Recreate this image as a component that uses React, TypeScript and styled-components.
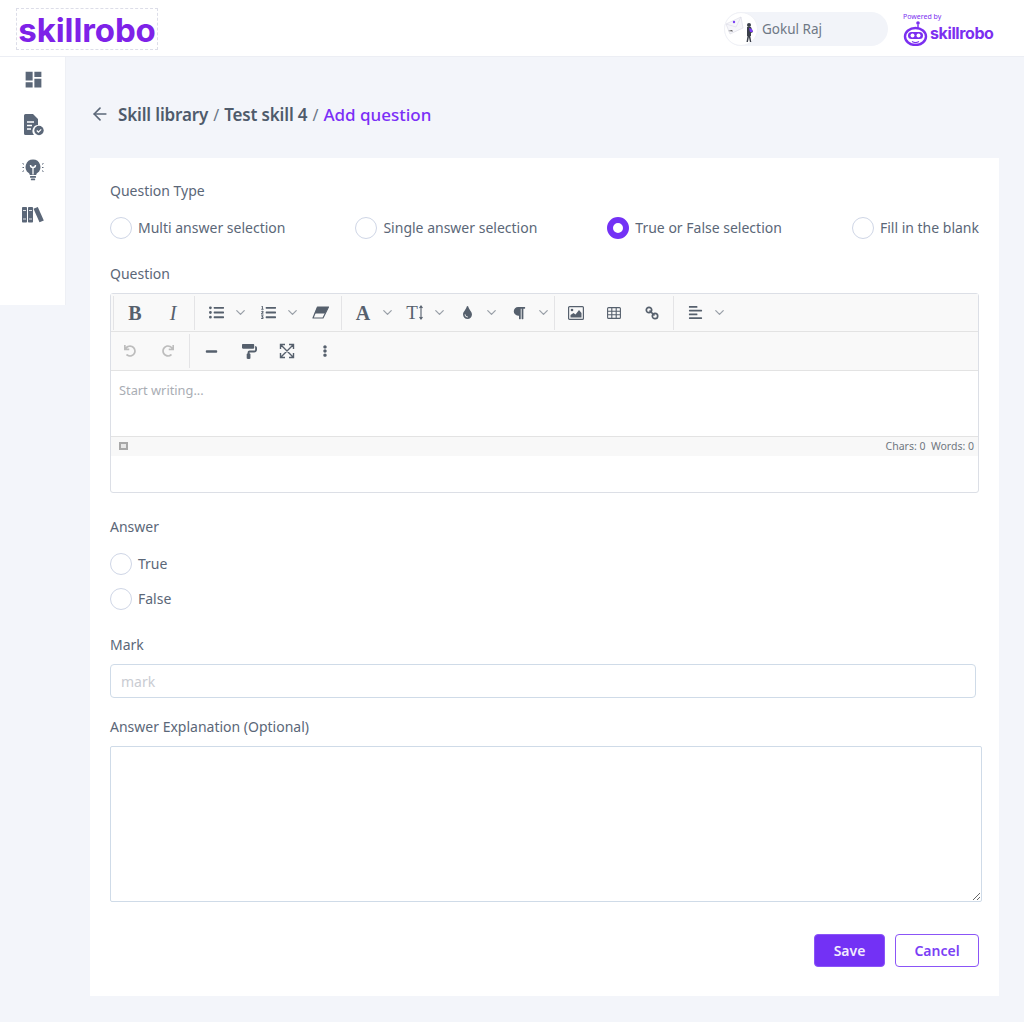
import styled, { createGlobalStyle } from "styled-components";
import { ArrowLeft, ChevronDown } from "lucide-react";
import { MdDashboard } from "react-icons/md";
import {
  FaEllipsisV,
  FaListOl,
  FaListUl,
  FaMinus,
  FaPaintRoller,
  FaParagraph,
  FaRedo,
  FaAlignLeft,
  FaTint,
  FaUndo,
} from "react-icons/fa";
import type { ReactNode } from "react";

const GlobalStyle = createGlobalStyle`
    html, body {
        margin: 0;
        padding: 0;
        background: #f3f5fa;
    }
    * {
        box-sizing: border-box;
    }
    body {
        font-family: "Noto Sans", "Open Sans", sans-serif;
        color: #5b6778;
    }
`;

const Page = styled.div`
    width: 1024px;
    min-height: 1022px;
    display: flex;
    flex-direction: column;
`;

const Header = styled.header`
    height: 57px;
    background: #fff;
    border-bottom: 1px solid #eceef4;
    display: flex;
    align-items: center;
    padding: 1px 30px 0 16px;
`;

const LogoBox = styled.div`
    width: 142px;
    height: 42px;
    border: 1px dashed #dcdde8;
    padding-top: 2px;
    display: flex;
    align-items: center;
    justify-content: center;
    font-family: "Inter", sans-serif;
    font-size: 33px;
    font-weight: 700;
    letter-spacing: -0.1px;
    color: #7e22e8;
`;

const UserPill = styled.div`
    margin-left: auto;
    width: 164px;
    height: 34px;
    border-radius: 17px;
    background: #f2f4f9;
    display: flex;
    align-items: center;
    gap: 4px;
    font-size: 13.5px;
    color: #6f7885;
`;

const Avatar = styled.div`
    width: 34px;
    height: 34px;
    border-radius: 50%;
    background: #fff;
    border: 1px solid #f0f1f6;
    flex: none;
`;

const Powered = styled.div`
    margin-left: 15px;
    width: 91px;
    display: flex;
    flex-direction: column;
    color: #7b2ff0;
`;

const PoweredText = styled.span`
    font-size: 7px;
    line-height: 9px;
`;

const PoweredBrand = styled.div`
    display: flex;
    align-items: center;
    gap: 2px;
    font-family: "Inter", sans-serif;
    font-weight: 700;
    font-size: 16px;
    letter-spacing: -0.4px;
    line-height: 24px;
`;

const Body = styled.div`
    flex: 1;
    display: flex;
    align-items: flex-start;
`;

const Sidebar = styled.aside`
    width: 66px;
    flex: none;
    height: 248px;
    background: #fff;
    border-right: 1px solid #eef0f5;
    display: flex;
    flex-direction: column;
    align-items: center;
    padding-left: 1px;
    color: #5b6778;
`;

const SideItem = styled.div`
    width: 24px;
    height: 45px;
    display: flex;
    align-items: center;
    justify-content: center;
`;

const Main = styled.main`
    flex: 1;
    min-width: 0;
    padding: 43px 25px 26px 24px;
`;

const Crumbs = styled.div`
    height: 28px;
    display: flex;
    align-items: center;
    gap: 8px;
    font-size: 17px;
    margin-bottom: 30px;
    svg {
        color: #5b6778;
    }
`;

const Crumb = styled.span<{ $active?: boolean }>`
    font-weight: ${(p) => (p.$active ? 500 : 600)};
    letter-spacing: ${(p) => (p.$active ? 0 : -0.15)}px;
    color: ${(p) => (p.$active ? "#7b2ff7" : "#4f5b6b")};
`;

const Slash = styled.span`
    color: #6b7685;
    font-size: 16px;
    margin: 0 5px;
`;

const Card = styled.form`
    background: #fff;
    padding: 23px 20px 29px;
    height: 838px;
`;

const Label = styled.div<{ $top?: number; $bottom?: number }>`
    font-size: 14px;
    line-height: 20px;
    color: #5b6778;
    margin-top: ${(p) => p.$top ?? 0}px;
    margin-bottom: ${(p) => p.$bottom ?? 9}px;
`;

const RadioRow = styled.div`
    display: flex;
    justify-content: space-between;
`;

const RadioItem = styled.label<{ $top?: number }>`
    display: flex;
    align-items: center;
    gap: 6px;
    height: 22px;
    font-size: 14px;
    color: #5b6778;
    margin-top: ${(p) => p.$top ?? 0}px;
`;

const RadioMark = styled.span<{ $on?: boolean }>`
    width: 22px;
    height: 22px;
    border-radius: 50%;
    flex: none;
    background: #fff;
    border: ${(p) => (p.$on ? "6px solid #7331f5" : "1px solid #cfd6e6")};
`;

const RadioText = styled.span`
    margin-top: -2px;
`;

const Editor = styled.div`
    height: 200px;
    border: 1px solid #dcdfe6;
    border-radius: 3px;
    background: #fff;
`;

const ToolRow = styled.div<{ $tall?: boolean }>`
    height: ${(p) => (p.$tall ? 39 : 38)}px;
    background: #f9f9f9;
    border-bottom: 1px solid #e3e3e3;
    display: flex;
    align-items: center;
`;

const Sep = styled.span`
    width: 5px;
    height: 34px;
    display: flex;
    justify-content: center;
    &::before {
        content: "";
        width: 1px;
        background: #e4e4e6;
    }
`;

const Tool = styled.span<{ $drop?: boolean; $muted?: boolean }>`
    width: ${(p) => (p.$drop ? 52 : 38)}px;
    height: 34px;
    flex: none;
    display: flex;
    align-items: center;
    color: ${(p) => (p.$muted ? "#bdbdbd" : "#56606d")};
`;

const ToolIcon = styled.span`
    width: 38px;
    flex: none;
    display: flex;
    align-items: center;
    justify-content: center;
`;

const Glyph = styled.span<{ $italic?: boolean; $size?: number; $light?: boolean }>`
    font-family: "Liberation Serif", serif;
    font-size: ${(p) => p.$size ?? 20}px;
    font-weight: ${(p) => (p.$italic || p.$light ? 400 : 700)};
    font-style: ${(p) => (p.$italic ? "italic" : "normal")};
    line-height: 1;
`;

const ToolChevron = styled(ChevronDown)`
    width: 15px;
    height: 15px;
    color: #9aa0a8;
    margin-left: -2px;
`;

const Writing = styled.div`
    height: 65px;
    padding: 9px 8px;
    font-size: 12.8px;
    line-height: 20px;
    color: #a9adb4;
`;

const Status = styled.div`
    height: 20px;
    background: #f8f8f8;
    border-top: 1px solid #e3e3e3;
    display: flex;
    align-items: center;
    justify-content: space-between;
    padding: 0 4px 2px 8px;
    font-size: 10.5px;
    color: #6f7680;
`;

const Resizer = styled.span`
    width: 9px;
    height: 8px;
    border: 2px solid #a8a8a8;
    background: #e8e8e8;
`;

const MarkInput = styled.input`
    display: block;
    width: 866px;
    height: 34px;
    border: 1px solid #cfdbe8;
    border-radius: 4px;
    padding: 0 10px;
    font: inherit;
    font-size: 14px;
    outline: none;
    &::placeholder {
        color: #c9ccd2;
    }
`;

const Explain = styled.textarea`
    display: block;
    width: 872px;
    height: 156px;
    border: 1px solid #cfdbe8;
    border-radius: 2px;
    outline: none;
    font: inherit;
`;

const Actions = styled.div`
    display: flex;
    justify-content: flex-end;
    gap: 10px;
    margin-top: 32px;
`;

const Button = styled.button<{ $primary?: boolean }>`
    width: ${(p) => (p.$primary ? 71 : 84)}px;
    height: 33px;
    border-radius: 4px;
    font-family: inherit;
    font-size: 14px;
    font-weight: 600;
    border: 1px solid #8b55f7;
    background: ${(p) => (p.$primary ? "#7331f5" : "#fff")};
    color: ${(p) => (p.$primary ? "#f1eafe" : "#7b3ff5")};
`;

const AvatarArt = () => (
  <svg width="32" height="32" viewBox="0 0 32 32">
    <path d="M1 11L16 4l2 11-13 6z" fill="#f6f6fa" stroke="#dedee8" strokeWidth="0.7" />
    <path d="M1 11l10 3 5-10" fill="none" stroke="#dedee8" strokeWidth="0.7" />
    <circle cx="9" cy="9" r="1.200" fill="#7b3ff5" />
    <path d="M3 18l4-1 1 1.500z" fill="#555" />
    <circle cx="24" cy="12" r="2" fill="#3a3f4a" />
    <path d="M22 14h4l2 5-2 1 0 3h-4z" fill="#3a3f4a" />
    <path d="M24 15l3 1 1 3-3 0z" fill="#7b3ff5" />
    <path d="M22.500 23l-1 6h1.400l1-5 1 5h1.400l-1-6z" fill="#3a3f4a" />
  </svg>
);

const RobotLogo = () => (
  <svg width="25" height="25" viewBox="0 0 25 25" fill="none">
    <circle cx="15" cy="2" r="1.800" fill="#7b2ff0" />
    <path d="M15 3.500v3.500" stroke="#7b2ff0" strokeWidth="1.500" />
    <ellipse cx="12.500" cy="15.500" rx="10.500" ry="8.500" stroke="#7b2ff0" strokeWidth="2.400" />
    <rect x="5" y="11" width="15" height="7" rx="3.500" fill="#7b2ff0" />
    <circle cx="9.500" cy="14.500" r="2" fill="#fff" />
    <circle cx="15.500" cy="14.500" r="2" fill="#fff" />
    <path d="M9 20.500c2 1.200 5 1.200 7 0" stroke="#7b2ff0" strokeWidth="1.200" />
  </svg>
);

const DocCheckIcon = () => (
  <svg width="21" height="23" viewBox="0 0 21 23" fill="#5b6778">
    <path d="M1 2.500A1.500 1.500 0 0 1 2.500 1H10l5 5v6a6 6 0 0 0-4 10H2.500A1.500 1.500 0 0 1 1 20.500z" />
    <path d="M4 9h7M4 12.500h5M4 16h4" stroke="#fff" strokeWidth="1.300" />
    <circle cx="16" cy="17.500" r="4.700" />
    <path d="M13.800 17.500l1.600 1.600 2.800-2.800" stroke="#fff" strokeWidth="1.200" fill="none" />
  </svg>
);

const BulbIcon = () => (
  <svg width="22" height="22" viewBox="0 0 22 22" fill="#5b6778">
    <path d="M11 .5a7.500 7.500 0 0 0-4.300 13.600c.7.500 1 1 1 1.900h6.600c0-.9.300-1.400 1-1.900A7.500 7.500 0 0 0 11 .5z" />
    <path d="M8.500 6c0 1.700 1.200 2.500 2.500 2.500s2.500-.8 2.500-2.500" stroke="#fff" strokeWidth="1.400" fill="none" />
    <path d="M11 8.500v7" stroke="#fff" strokeWidth="1.300" />
    <rect x="8" y="17" width="6" height="1.700" rx=".5" />
    <rect x="8.800" y="19.500" width="4.400" height="1.800" rx=".9" />
    <path d="M.5 4.500l1.500.8M.5 8.500H2M.5 12.500l1.500-.8M21.500 4.500l-1.500.8M21.500 8.500H20M21.500 12.500l-1.500-.8" stroke="#5b6778" strokeWidth="1" />
  </svg>
);

const BooksIcon = () => (
  <svg width="22" height="17" viewBox="0 0 22 17" fill="#5b6778">
    <rect x="0" y="1" width="5" height="15.500" rx=".8" />
    <rect x="6" y="1" width="5" height="15.500" rx=".8" />
    <path d="M11.500 2.800l4.300-1.800 6 13.400-4.300 1.900z" />
    <path d="M1 4.500h3M7 4.500h3M1 13h3M7 13h3" stroke="#fff" strokeWidth=".8" />
  </svg>
);

const EraserIcon = () => (
  <svg width="17" height="13" viewBox="0 0 17 13" fill="currentColor">
    <path d="M5.500 1H16.500L11 12H1z" fill="none" stroke="currentColor" strokeWidth="1.200" strokeLinejoin="round" />
    <path d="M5.500 1H16.500L13 7.500H2.500z" />
  </svg>
);

const HeightIcon = () => (
  <svg width="6" height="15" viewBox="0 0 6 15" fill="none" stroke="currentColor" strokeWidth="1.100">
    <path d="M3 1v13M1.500 3L3 1l1.500 2M1.500 12L3 14l1.500-2" />
  </svg>
);

const ImageIcon = () => (
  <svg width="16" height="14" viewBox="0 0 16 14" fill="currentColor">
    <rect x=".6" y=".6" width="14.800" height="12.800" rx="1" fill="none" stroke="currentColor" strokeWidth="1.200" />
    <circle cx="4" cy="4" r="1.300" />
    <path d="M2.500 11.500V9l3-2 2 1.500L11 4l2.500 3v4.500z" />
  </svg>
);

const TableIcon = () => (
  <svg width="14" height="12" viewBox="0 0 14 12" fill="none" stroke="currentColor" strokeWidth="1.100">
    <rect x=".6" y=".6" width="12.800" height="10.800" rx="1" />
    <path d="M.6 4.200h12.800M.6 7.800h12.800M4.800.6v10.800M9.200.6v10.800" />
  </svg>
);

const LinkIcon = () => (
  <svg width="14" height="14" viewBox="0 0 14 14" fill="none" stroke="currentColor" strokeWidth="1.700">
    <circle cx="4" cy="4" r="2.700" />
    <circle cx="10" cy="10" r="2.700" />
    <path d="M4.500 4.500l5 5" />
  </svg>
);

const ExpandIcon = () => (
  <svg width="16" height="16" viewBox="0 0 16 16" fill="none" stroke="currentColor" strokeWidth="1.400">
    <path d="M1.500 6V1.500H6M10 1.500h4.500V6M14.500 10v4.500H10M6 14.500H1.500V10M1.500 1.500l13 13M14.500 1.500l-13 13" />
  </svg>
);

type RadioProps = { on?: boolean; top?: number; children: ReactNode };

const Radio = ({ on, top, children }: RadioProps) => (
  <RadioItem $top={top}>
    <RadioMark $on={on} />
    <RadioText>{children}</RadioText>
  </RadioItem>
);

const Btn = ({ icon, drop, muted }: { icon: ReactNode; drop?: boolean; muted?: boolean }) => (
  <Tool $drop={drop} $muted={muted}>
    <ToolIcon>{icon}</ToolIcon>
    {drop && <ToolChevron />}
  </Tool>
);

const App = () => {
  return (
    <Page>
      <GlobalStyle />
      <Header>
        <LogoBox>skillrobo</LogoBox>
        <UserPill>
          <Avatar>
            <AvatarArt />
          </Avatar>
          Gokul Raj
        </UserPill>
        <Powered>
          <PoweredText>Powered by</PoweredText>
          <PoweredBrand>
            <RobotLogo />
            skillrobo
          </PoweredBrand>
        </Powered>
      </Header>
      <Body>
        <Sidebar>
          <SideItem>
            <MdDashboard size={21} />
          </SideItem>
          <SideItem>
            <DocCheckIcon />
          </SideItem>
          <SideItem>
            <BulbIcon />
          </SideItem>
          <SideItem>
            <BooksIcon />
          </SideItem>
        </Sidebar>
        <Main>
          <Crumbs>
            <ArrowLeft size={20} />
            <div>
              <Crumb>Skill library</Crumb>
              <Slash>/</Slash>
              <Crumb>Test skill 4</Crumb>
              <Slash>/</Slash>
              <Crumb $active>Add question</Crumb>
            </div>
          </Crumbs>
          <Card>
            <Label $bottom={16}>Question Type</Label>
            <RadioRow>
              <Radio>Multi answer selection</Radio>
              <Radio>Single answer selection</Radio>
              <Radio on>True or False selection</Radio>
              <Radio>Fill in the blank</Radio>
            </RadioRow>
            <Label $top={25}>Question</Label>
            <Editor>
              <ToolRow>
                <Sep />
                <Btn icon={<Glyph>B</Glyph>} />
                <Btn icon={<Glyph $italic>I</Glyph>} />
                <Sep />
                <Btn drop icon={<FaListUl size={15} />} />
                <Btn drop icon={<FaListOl size={15} />} />
                <Btn icon={<EraserIcon />} />
                <Sep />
                <Btn drop icon={<Glyph>A</Glyph>} />
                <Btn drop icon={<><Glyph $light $size={19}>T</Glyph><HeightIcon /></>} />
                <Btn drop icon={<FaTint size={13} />} />
                <Btn drop icon={<FaParagraph size={14} />} />
                <Sep />
                <Btn icon={<ImageIcon />} />
                <Btn icon={<TableIcon />} />
                <Btn icon={<LinkIcon />} />
                <Sep />
                <Btn drop icon={<FaAlignLeft size={15} />} />
              </ToolRow>
              <ToolRow $tall>
                <Btn muted icon={<FaUndo size={12} />} />
                <Btn muted icon={<FaRedo size={12} />} />
                <Sep />
                <Btn icon={<FaMinus size={13} />} />
                <Btn icon={<FaPaintRoller size={15} />} />
                <Btn icon={<ExpandIcon />} />
                <Btn icon={<FaEllipsisV size={12} />} />
              </ToolRow>
              <Writing>Start writing...</Writing>
              <Status>
                <Resizer />
                <span>Chars: 0 &nbsp;Words: 0</span>
              </Status>
            </Editor>
            <Label $top={24} $bottom={16}>Answer</Label>
            <Radio>True</Radio>
            <Radio top={13}>False</Radio>
            <Label $top={25}>Mark</Label>
            <MarkInput placeholder="mark" />
            <Label $top={19}>Answer Explanation (Optional)</Label>
            <Explain />
            <Actions>
              <Button $primary type="button">Save</Button>
              <Button type="button">Cancel</Button>
            </Actions>
          </Card>
        </Main>
      </Body>
    </Page>
  );
};

export default App;
